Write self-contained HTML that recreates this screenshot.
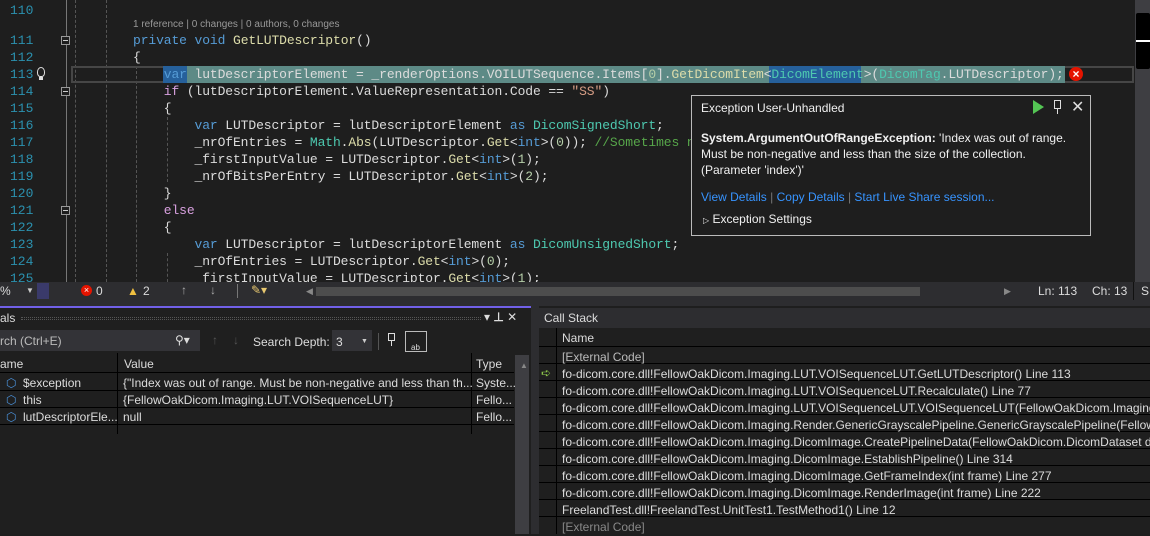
<!DOCTYPE html>
<html><head><meta charset="utf-8"><style>
*{margin:0;padding:0;box-sizing:border-box}
body{width:1150px;height:534px;overflow:hidden;background:#1e1e1e;position:relative;font-family:"Liberation Sans",sans-serif;color:#dcdcdc}
.a{position:absolute;white-space:pre}
.code{font-family:"Liberation Mono",monospace;font-size:13px;color:#dcdcdc;line-height:17px;letter-spacing:-0.11px}
.ln{font-family:"Liberation Mono",monospace;font-size:13px;color:#2b91af;line-height:17px}
.k{color:#569cd6}.m{color:#dcdcaa}.t{color:#4ec9b0}.s{color:#d69d85}.c{color:#57a64a}.p{color:#d8a0df}.n{color:#b5cea8}
.ui{font-size:12px}
.box{position:absolute;width:9px;height:9px;border:1px solid #999;left:61px;background:#1e1e1e}
.box:after{content:"";position:absolute;left:1px;top:3px;width:5px;height:1px;background:#ccc}
.row{position:absolute;height:17px;font-size:12px;line-height:17px;border-bottom:1px solid #000}
</style></head><body>
<!-- editor -->
<div class="a" style="left:66px;top:0;width:1px;height:282px;background:#777"></div>
<div class="a" style="left:75px;top:0;height:282px;border-left:1px dashed #555"></div>
<div class="a" style="left:106px;top:0;height:282px;border-left:1px dashed #555"></div>
<div class="a" style="left:136px;top:66px;height:216px;border-left:1px dashed #555"></div>
<div class="a" style="left:167px;top:117px;height:65px;border-left:1px dashed #555"></div>
<div class="a" style="left:167px;top:253px;height:29px;border-left:1px dashed #555"></div>
<div class="a" style="left:71px;top:66px;width:1063px;height:17px;border:2px solid #464646"></div>
<div class="a" style="left:163px;top:66px;width:902px;height:17px;background:#5d8a86"></div>
<div class="a" style="left:163px;top:66px;width:24px;height:17px;background:#26609b"></div>
<div class="a" style="left:769px;top:66px;width:92px;height:17px;background:#26609b"></div>
<div class="a ln" style="left:10px;top:2px">110</div>
<div class="a" style="left:133px;top:19px;font-size:10px;color:#999">1 reference | 0 changes | 0 authors, 0 changes</div>
<div class="box" style="top:36px"></div><div class="box" style="top:87px"></div><div class="box" style="top:206px"></div>
<div class="a" style="left:37px;top:67px;width:8px;height:10px;border:1.5px solid #ddd;border-radius:50% 50% 40% 40%"></div>
<div class="a" style="left:39px;top:77px;width:4px;height:3px;background:#ddd"></div>
<div class="a ln" style="left:10px;top:32px">111
112
113
114
115
116
117
118
119
120
121
122
123
124
125</div>
<div class="code a" style="left:133px;top:32px"><span class="k">private</span> <span class="k">void</span> <span class="m">GetLUTDescriptor</span>()
{
    <span class="k">var</span> lutDescriptorElement = _renderOptions.VOILUTSequence.Items[<span class="n">0</span>].<span class="m">GetDicomItem</span>&lt;<span class="t">DicomElement</span>&gt;(<span class="t">DicomTag</span>.LUTDescriptor);
    <span class="p">if</span> (lutDescriptorElement.ValueRepresentation.Code == <span class="s">"SS"</span>)
    {
        <span class="k">var</span> LUTDescriptor = lutDescriptorElement <span class="k">as</span> <span class="t">DicomSignedShort</span>;
        _nrOfEntries = <span class="t">Math</span>.<span class="m">Abs</span>(LUTDescriptor.<span class="m">Get</span>&lt;<span class="k">int</span>&gt;(<span class="n">0</span>)); <span class="c">//Sometimes ne</span>
        _firstInputValue = LUTDescriptor.<span class="m">Get</span>&lt;<span class="k">int</span>&gt;(<span class="n">1</span>);
        _nrOfBitsPerEntry = LUTDescriptor.<span class="m">Get</span>&lt;<span class="k">int</span>&gt;(<span class="n">2</span>);
    }
    <span class="p">else</span>
    {
        <span class="k">var</span> LUTDescriptor = lutDescriptorElement <span class="k">as</span> <span class="t">DicomUnsignedShort</span>;
        _nrOfEntries = LUTDescriptor.<span class="m">Get</span>&lt;<span class="k">int</span>&gt;(<span class="n">0</span>);
         firstInputValue = LUTDescriptor.<span class="m">Get</span>&lt;<span class="k">int</span>&gt;(<span class="n">1</span>);</div>
<div class="a" style="left:1069px;top:67px;width:14px;height:14px;border-radius:50%;background:#e51400;color:#fff;font-size:12px;line-height:14px;text-align:center;font-weight:bold">×</div>
<!-- right scrollbar -->
<div class="a" style="left:1135px;top:0;width:15px;height:282px;background:#3e3e42"></div>
<div class="a" style="left:1136px;top:13px;width:14px;height:56px;background:#000;border-radius:2px"></div>
<div class="a" style="left:1136px;top:40px;width:14px;height:2px;background:#fff"></div>
<!-- exception popup -->
<div class="a" style="left:691px;top:95px;width:400px;height:141px;background:#1e1e1e;border:1px solid #bbb"></div>
<div class="a ui" style="left:701px;top:101px;color:#f0f0f0">Exception User-Unhandled</div>
<div class="a" style="left:1033px;top:100px;width:0;height:0;border-left:11px solid #54c554;border-top:7px solid transparent;border-bottom:7px solid transparent"></div>
<div class="a" style="left:1054px;top:100px;width:7px;height:9px;border:1px solid #ddd"></div>
<div class="a" style="left:1057px;top:109px;width:1px;height:5px;background:#ddd"></div>
<div class="a" style="left:1071px;top:97px;font-size:16px;color:#ddd">✕</div>
<div class="a ui" style="left:701px;top:130px;color:#f0f0f0;line-height:16px"><b>System.ArgumentOutOfRangeException:</b> 'Index was out of range.
Must be non-negative and less than the size of the collection.
(Parameter 'index')'</div>
<div class="a ui" style="left:701px;top:190px;color:#3794ff">View Details <span style="color:#777">|</span> Copy Details <span style="color:#777">|</span> Start Live Share session...</div>
<div class="a ui" style="left:703px;top:212px;color:#f0f0f0"><span style="font-size:8px">▷</span> Exception Settings</div>
<!-- editor status bar -->
<div class="a" style="left:0;top:282px;width:1150px;height:18px;background:#2d2d30"></div>
<div class="a ui" style="left:0;top:284px">%</div>
<div class="a" style="left:26px;top:286px;font-size:8px;color:#ccc">▼</div>
<div class="a" style="left:37px;top:283px;width:12px;height:16px;background:#3a3a6a"></div>
<div class="a" style="left:81px;top:285px;width:11px;height:11px;border-radius:50%;background:#e51400;font-size:9px;color:#fff;text-align:center;line-height:11px">×</div>
<div class="a ui" style="left:96px;top:284px">0</div>
<div class="a" style="left:127px;top:284px;font-size:12px;color:#f0c040">▲</div>
<div class="a ui" style="left:143px;top:284px">2</div>
<div class="a ui" style="left:181px;top:283px;color:#aaa">↑</div>
<div class="a ui" style="left:210px;top:283px;color:#aaa">↓</div>
<div class="a" style="left:237px;top:284px;width:1px;height:14px;background:#777"></div>
<div class="a ui" style="left:251px;top:283px;color:#e8c870">✎▾</div>
<div class="a" style="left:306px;top:286px;font-size:9px;color:#888">◀</div>
<div class="a" style="left:316px;top:287px;width:604px;height:9px;background:#4d4d4d"></div>
<div class="a" style="left:1004px;top:286px;font-size:9px;color:#888">▶</div>
<div class="a ui" style="left:1038px;top:284px">Ln: 113</div>
<div class="a ui" style="left:1092px;top:284px">Ch: 13</div>
<div class="a" style="left:1133px;top:282px;width:1px;height:18px;background:#111"></div>
<div class="a ui" style="left:1141px;top:284px">SI</div>
<div class="a" style="left:0;top:300px;width:1150px;height:6px;background:#2d2d30"></div>
<!-- locals -->
<div class="a" style="left:0;top:306px;width:531px;height:2px;background:#7160e8"></div>
<div class="a" style="left:0;top:308px;width:531px;height:226px;background:#1f1f1f"></div>
<div class="a ui" style="left:0;top:311px">als</div>
<div class="a" style="left:21px;top:317px;width:460px;height:3px;border-top:1px dotted #555;border-bottom:1px dotted #555"></div>
<div class="a ui" style="left:484px;top:310px;color:#ddd">▾ <span style="font-weight:bold">⊥</span> ✕</div>
<div class="a" style="left:0;top:330px;width:200px;height:21px;background:#333337"></div>
<div class="a ui" style="left:0;top:334px;color:#bbb">rch (Ctrl+E)</div>
<div class="a ui" style="left:175px;top:333px;color:#ddd">⚲▾</div>
<div class="a ui" style="left:212px;top:333px;color:#555">↑</div>
<div class="a ui" style="left:233px;top:333px;color:#555">↓</div>
<div class="a ui" style="left:253px;top:335px;color:#ddd">Search Depth:</div>
<div class="a" style="left:332px;top:330px;width:40px;height:21px;background:#333337"></div>
<div class="a ui" style="left:336px;top:335px;color:#ddd">3</div>
<div class="a" style="left:361px;top:338px;font-size:7px;color:#ccc">▼</div>
<div class="a" style="left:378px;top:333px;width:1px;height:17px;background:#555"></div>
<div class="a" style="left:388px;top:333px;width:7px;height:8px;border:1px solid #ddd"></div>
<div class="a" style="left:391px;top:341px;width:1px;height:5px;background:#ddd"></div>
<div class="a" style="left:405px;top:331px;width:22px;height:21px;border:1px solid #bbb"></div>
<div class="a" style="left:411px;top:343px;font-size:8px;color:#ddd">ab</div>
<div class="a" style="left:0;top:353px;width:514px;height:20px;background:#1f1f1f;border-bottom:1px solid #000"></div>
<div class="a ui" style="left:0;top:357px">ame</div>
<div class="a" style="left:117px;top:353px;width:1px;height:81px;background:#000"></div>
<div class="a ui" style="left:124px;top:357px">Value</div>
<div class="a" style="left:471px;top:353px;width:1px;height:81px;background:#000"></div>
<div class="a ui" style="left:476px;top:357px">Type</div>
<div class="row" style="left:0;top:374px;width:514px"></div>
<div class="row" style="left:0;top:391px;width:514px"></div>
<div class="row" style="left:0;top:408px;width:514px"></div>
<div class="a ui" style="left:6px;top:376px;color:#4a90d9">⬡</div><div class="a ui" style="left:6px;top:393px;color:#4a90d9">⬡</div><div class="a ui" style="left:6px;top:410px;color:#4a90d9">⬡</div>
<div class="a ui" style="left:23px;top:376px">$exception</div>
<div class="a ui" style="left:123px;top:376px">{"Index was out of range. Must be non-negative and less than th...</div>
<div class="a ui" style="left:476px;top:376px">Syste...</div>
<div class="a ui" style="left:23px;top:393px">this</div>
<div class="a ui" style="left:123px;top:393px">{FellowOakDicom.Imaging.LUT.VOISequenceLUT}</div>
<div class="a ui" style="left:476px;top:393px">Fello...</div>
<div class="a ui" style="left:23px;top:410px">lutDescriptorEle...</div>
<div class="a ui" style="left:123px;top:410px">null</div>
<div class="a ui" style="left:476px;top:410px">Fello...</div>
<div class="a" style="left:515px;top:355px;width:14px;height:179px;background:#3e3e42"></div>
<div class="a" style="left:520px;top:361px;font-size:8px;color:#888">▲</div>
<!-- splitter -->
<div class="a" style="left:531px;top:306px;width:8px;height:228px;background:#2d2d30"></div>
<!-- call stack -->
<div class="a" style="left:539px;top:308px;width:611px;height:20px;background:#2d2d30"></div>
<div class="a ui" style="left:544px;top:311px">Call Stack</div>
<div class="a" style="left:539px;top:328px;width:611px;height:206px;background:#1f1f1f"></div>
<div class="a" style="left:539px;top:328px;width:611px;height:19px;border-bottom:1px solid #000"></div>
<div class="a" style="left:556px;top:328px;width:1px;height:206px;background:#000"></div>
<div class="a ui" style="left:562px;top:331px">Name</div>
<div class="row" style="left:539px;top:347px;width:611px"></div>
<div class="row" style="left:539px;top:364px;width:611px"></div>
<div class="row" style="left:539px;top:381px;width:611px"></div>
<div class="row" style="left:539px;top:398px;width:611px"></div>
<div class="row" style="left:539px;top:415px;width:611px"></div>
<div class="row" style="left:539px;top:432px;width:611px"></div>
<div class="row" style="left:539px;top:449px;width:611px"></div>
<div class="row" style="left:539px;top:466px;width:611px"></div>
<div class="row" style="left:539px;top:483px;width:611px"></div>
<div class="row" style="left:539px;top:500px;width:611px"></div>
<div class="a ui" style="left:541px;top:366px;color:#8bc34a">➪</div>
<div class="a ui" style="left:562px;top:349px;line-height:17px"><span style="color:#bbb">[External Code]</span>
fo-dicom.core.dll!FellowOakDicom.Imaging.LUT.VOISequenceLUT.GetLUTDescriptor() Line 113
fo-dicom.core.dll!FellowOakDicom.Imaging.LUT.VOISequenceLUT.Recalculate() Line 77
fo-dicom.core.dll!FellowOakDicom.Imaging.LUT.VOISequenceLUT.VOISequenceLUT(FellowOakDicom.Imaging.G
fo-dicom.core.dll!FellowOakDicom.Imaging.Render.GenericGrayscalePipeline.GenericGrayscalePipeline(FellowO
fo-dicom.core.dll!FellowOakDicom.Imaging.DicomImage.CreatePipelineData(FellowOakDicom.DicomDataset da
fo-dicom.core.dll!FellowOakDicom.Imaging.DicomImage.EstablishPipeline() Line 314
fo-dicom.core.dll!FellowOakDicom.Imaging.DicomImage.GetFrameIndex(int frame) Line 277
fo-dicom.core.dll!FellowOakDicom.Imaging.DicomImage.RenderImage(int frame) Line 222
FreelandTest.dll!FreelandTest.UnitTest1.TestMethod1() Line 12
<span style="color:#888">[External Code]</span></div>
</body></html>
